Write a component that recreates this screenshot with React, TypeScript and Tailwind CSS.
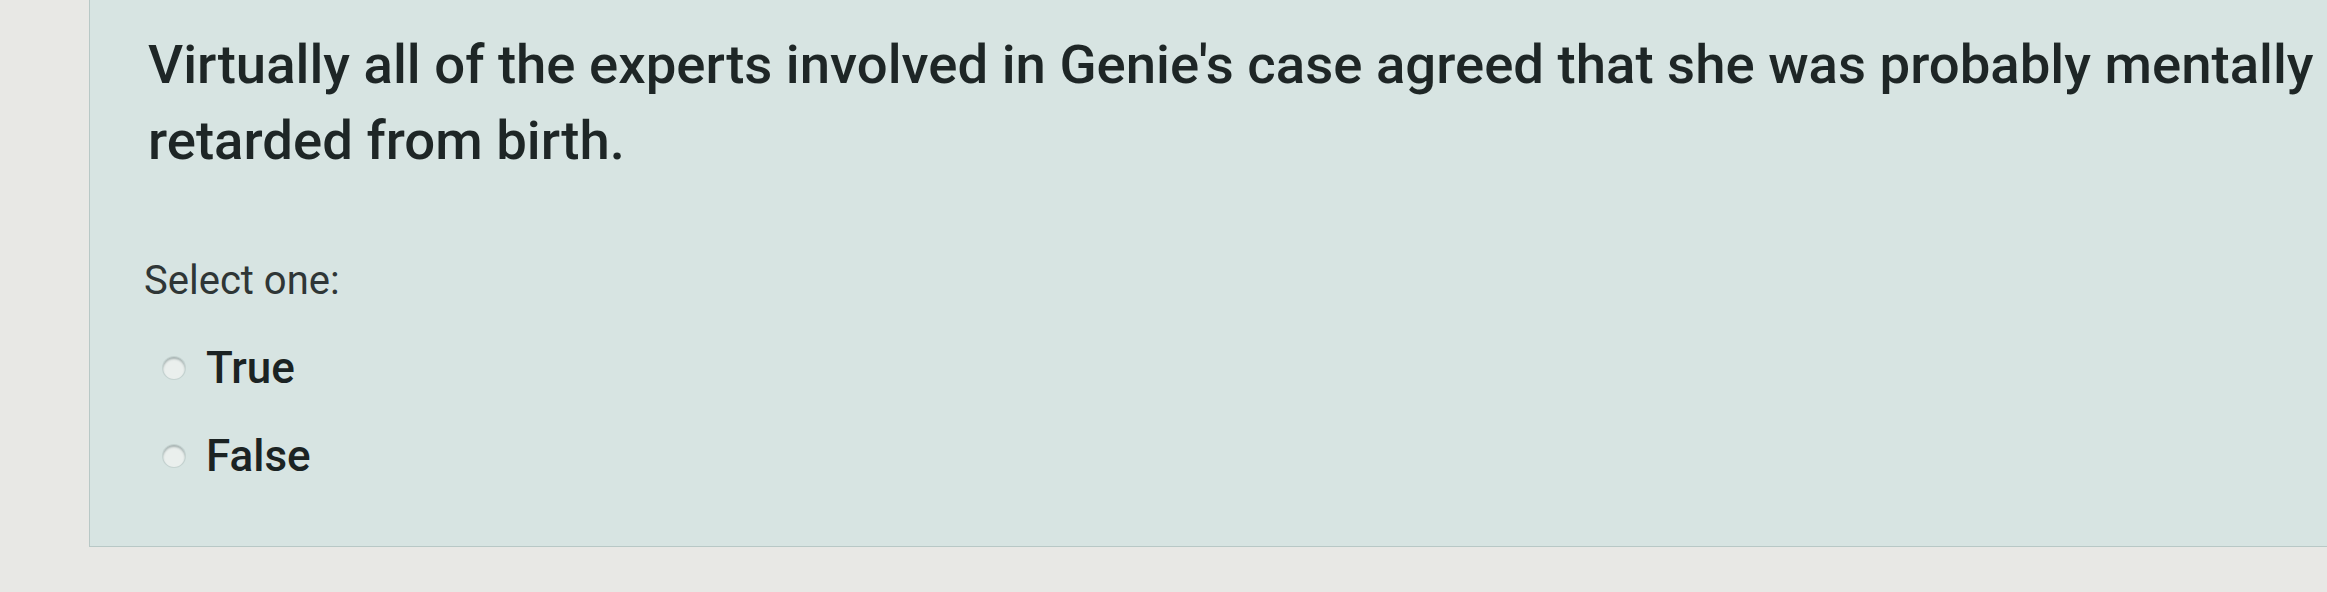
import React from 'react';

type Option = { id: string; label: string };

const options: Option[] = [
  { id: 'opt-true', label: 'True' },
  { id: 'opt-false', label: 'False' },
];

// Unselected radio dot, drawn with a faint inset shadow along its upper rim
const RadioDot: React.FC = () => (
  <span className="block w-[22px] h-[22px] rounded-full bg-[#eaefed] shadow-[inset_0_2px_2px_rgba(90,110,110,0.45),0_0_0_1px_rgba(160,178,176,0.35)] shrink-0" />
);

export default function App() {
  return (
    <div
      className="w-full h-[592px] bg-[#e8e8e5] flex flex-col overflow-hidden"
      style={{ fontFamily: 'Roboto, "Liberation Sans", sans-serif' }}
    >
      {/* Question card */}
      <div className="flex h-[547px] shrink-0">
        <div className="w-[89px] shrink-0" />
        <div className="flex-1 bg-[#d7e4e2] border-l border-b border-[#b8c8c6] pl-[58px] pt-[26px]">
          <p className="text-[54.5px] leading-[76px] font-medium text-[#1e2626] whitespace-nowrap">
            Virtually all of the experts involved in Genie's case agreed that she was probably mentally
          </p>
          <p className="text-[54.5px] leading-[76px] font-medium text-[#1e2626]">retarded from birth.</p>

          <p className="mt-[79px] -ml-[4px] text-[40px] leading-[48px] text-[#2f3636]">Select one:</p>

          {/* Answer list */}
          <div className="mt-[37px] flex flex-col gap-[36px] pl-[15px]">
            {options.map(o => (
              <label key={o.id} className="flex items-center gap-[21px]">
                <RadioDot />
                <span className="text-[44px] leading-[52px] font-medium text-[#1b2323]">{o.label}</span>
              </label>
            ))}
          </div>
        </div>
      </div>
      <div className="flex-1" />
    </div>
  );
}
